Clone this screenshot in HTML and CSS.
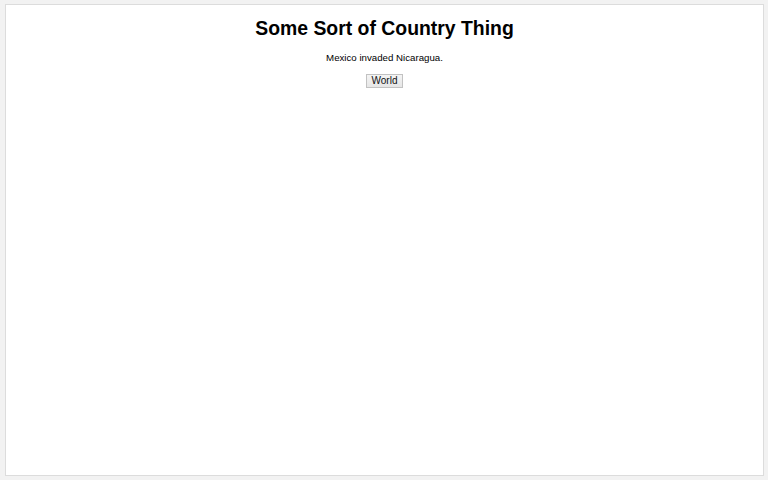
FILE: index.html
```html
<!DOCTYPE html>
<html>
<head>
<meta charset="utf-8">
<link rel="stylesheet" href="styles.css">
</head>
<body>
<div class="frame">
  <h1 class="title">Some Sort of Country Thing</h1>
  <p class="message">Mexico invaded Nicaragua.</p>
  <button class="btn">World</button>
</div>
</body>
</html>
```
FILE: styles.css
```css
html, body {
  margin: 0;
  padding: 0;
}
body {
  background: #f2f2f2;
  padding: 4px 4px 4px 5px;
  font-family: "Liberation Sans", Arial, sans-serif;
}
.frame {
  background: #fff;
  border: 1px solid #dcdcdc;
  height: 472px;
  box-sizing: border-box;
  display: flex;
  flex-direction: column;
  align-items: center;
}
.title {
  margin: 11px 0 0;
  font-size: 19.4px;
  font-weight: bold;
  color: #000;
  line-height: 24px;
}
.message {
  margin: 12px 0 0;
  font-size: 9.7px;
  line-height: 12px;
  color: #000;
}
.btn {
  margin-top: 10px;
  font-family: "Liberation Sans", Arial, sans-serif;
  font-size: 10px;
  padding: 0 5px;
  background: linear-gradient(#f4f4f4, #e6e6e6);
  border: 1px solid #c2c2c2;
  border-radius: 0;
  color: #111;
  line-height: 12px;
}
```
